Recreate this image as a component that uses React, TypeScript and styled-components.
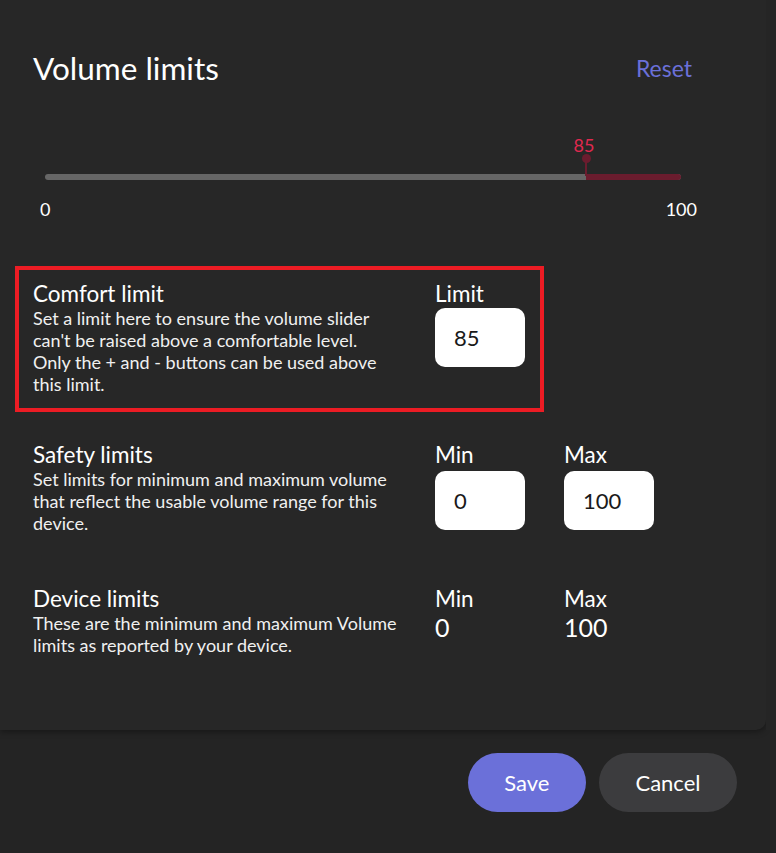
import styled, { createGlobalStyle } from 'styled-components';

const GlobalStyle = createGlobalStyle`
  * { box-sizing: border-box; }
  html, body {
    margin: 0;
    padding: 0;
    background: #242424;
    font-family: Lato, "Noto Sans", sans-serif;
    color: #fff;
  }
`;

const MIN = 0;
const MAX = 100;
const comfort = 85;

export default function App() {
  const pct = ((comfort - MIN) / (MAX - MIN)) * 100;

  return (
    <Page>
      <GlobalStyle />
      <Panel>
        <Content>
          <Header>
            <Title>Volume limits</Title>
            <ResetBtn>Reset</ResetBtn>
          </Header>

          <SliderArea>
            <Track>
              <Over style={{ left: `${pct}%` }} />
              <Thumb style={{ left: `${pct}%` }}>
                <ThumbValue>{comfort}</ThumbValue>
                <ThumbDot />
                <ThumbStem />
              </Thumb>
            </Track>
            <ScaleRow>
              <ScaleLabel>{MIN}</ScaleLabel>
              <ScaleLabel>{MAX}</ScaleLabel>
            </ScaleRow>
          </SliderArea>

          <Highlight>
            <Row $cols="402px 90px">
              <Info>
                <SectionTitle>Comfort limit</SectionTitle>
                <Desc $width={355}>
                  Set a limit here to ensure the volume slider can't be raised above a
                  comfortable level. Only the + and - buttons can be used above this limit.
                </Desc>
              </Info>
              <Field>
                <FieldLabel>Limit</FieldLabel>
                <NumberInput defaultValue={comfort} />
              </Field>
            </Row>
          </Highlight>

          <Section $top={30}>
            <Row $cols="402px 129px 129px">
              <Info>
                <SectionTitle>Safety limits</SectionTitle>
                <Desc $width={380}>
                  Set limits for minimum and maximum volume that reflect the usable volume
                  range for this device.
                </Desc>
              </Info>
              <Field $gap={3}>
                <FieldLabel>Min</FieldLabel>
                <NumberInput defaultValue={0} />
              </Field>
              <Field $gap={3}>
                <FieldLabel>Max</FieldLabel>
                <NumberInput defaultValue={100} />
              </Field>
            </Row>
          </Section>

          <Section $top={52}>
            <Row $cols="402px 129px 129px">
              <Info>
                <SectionTitle>Device limits</SectionTitle>
                <Desc $width={380}>
                  These are the minimum and maximum Volume limits as reported by your device.
                </Desc>
              </Info>
              <Field>
                <FieldLabel>Min</FieldLabel>
                <StaticValue>0</StaticValue>
              </Field>
              <Field>
                <FieldLabel>Max</FieldLabel>
                <StaticValue>100</StaticValue>
              </Field>
            </Row>
          </Section>
        </Content>
        <ScrollGutter />
      </Panel>

      <Footer>
        <PillButton $variant="primary">Save</PillButton>
        <PillButton $variant="secondary">Cancel</PillButton>
      </Footer>
    </Page>
  );
}

const Page = styled.div`
  height: 100vh;
  display: flex;
  flex-direction: column;
  background: #242424;
`;

const Panel = styled.div`
  flex: 1;
  display: flex;
  min-height: 0;
`;

const Content = styled.div`
  flex: 1;
  background: #272727;
  border-bottom-right-radius: 10px;
  box-shadow: 0 2px 6px rgba(0, 0, 0, 0.35);
  overflow: hidden;
`;

const ScrollGutter = styled.div`
  width: 10px;
  background: #252525;
`;

const Header = styled.div`
  margin: 50px 74px 0 33px;
  height: 36px;
  display: flex;
  align-items: center;
  justify-content: space-between;
`;

const Title = styled.h1`
  margin: 0;
  font-size: 31.5px;
  font-weight: 400;
  line-height: 36px;
`;

const ResetBtn = styled.button`
  background: none;
  border: none;
  padding: 0;
  font-family: inherit;
  font-size: 23px;
  line-height: 29px;
  color: #6b70d9;
  cursor: pointer;
`;

const SliderArea = styled.div`
  margin: 88px 0 0 45px;
  width: 636px;
`;

const Track = styled.div`
  position: relative;
  height: 6px;
  border-radius: 3px;
  background: #666;
`;

const Over = styled.div`
  position: absolute;
  top: 0;
  right: 0;
  bottom: 0;
  background: #6b1c2e;
  border-radius: 0 3px 3px 0;
`;

const Thumb = styled.div`
  position: absolute;
  bottom: 0;
  width: 0;
  height: 44px;
`;

const ThumbValue = styled.span`
  position: absolute;
  top: -1px;
  left: -12px;
  font-size: 18px;
  line-height: 21px;
  color: #e0294f;
`;

const ThumbDot = styled.span`
  position: absolute;
  top: 18px;
  left: -4px;
  width: 9px;
  height: 9px;
  border-radius: 50%;
  background: #6b1c2e;
`;

const ThumbStem = styled.span`
  position: absolute;
  top: 22px;
  left: -1px;
  width: 2px;
  height: 18px;
  background: #6b1c2e;
`;

const ScaleRow = styled.div`
  margin: 19px -16px 0 -5px;
  display: flex;
  justify-content: space-between;
`;

const ScaleLabel = styled.span`
  font-size: 18px;
  line-height: 21px;
  color: #fff;
`;

const Highlight = styled.div`
  margin: 46px 0 0 15px;
  width: 529px;
  border: 4px solid #ec1c24;
  padding: 11px 0 13px 14px;
`;

const Section = styled.div<{ $top: number }>`
  margin-top: ${({ $top }) => $top}px;
  padding-left: 33px;
`;

const Row = styled.div<{ $cols: string }>`
  display: grid;
  grid-template-columns: ${({ $cols }) => $cols};
  align-items: start;
`;

const Info = styled.div`
  display: flex;
  flex-direction: column;
`;

const SectionTitle = styled.h2`
  margin: 0;
  font-size: 22.5px;
  font-weight: 400;
  line-height: 26px;
`;

const Desc = styled.p<{ $width: number }>`
  margin: 0;
  max-width: ${({ $width }) => $width}px;
  font-size: 18px;
  line-height: 22px;
  color: #f0f0f0;
`;

const Field = styled.div<{ $gap?: number }>`
  display: flex;
  flex-direction: column;
  gap: ${({ $gap = 1 }) => $gap}px;
`;

const FieldLabel = styled.span`
  font-size: 22.5px;
  line-height: 26px;
`;

const NumberInput = styled.input`
  width: 90px;
  height: 59px;
  border: none;
  border-radius: 10px;
  background: #fff;
  padding: 0 0 0 19px;
  font-family: inherit;
  font-size: 22px;
  color: #1a1a1a;
  outline: none;
`;

const StaticValue = styled.span`
  font-size: 25px;
  line-height: 30px;
  margin-top: -1px;
`;

const Footer = styled.div`
  flex: none;
  height: 123px;
  display: flex;
  justify-content: flex-end;
  align-items: flex-start;
  gap: 13px;
  padding: 23px 39px 0 0;
`;

const PillButton = styled.button<{ $variant: 'primary' | 'secondary' }>`
  height: 59px;
  padding: 0 36.5px;
  border: none;
  border-radius: 30px;
  font-family: inherit;
  font-size: 22px;
  color: #fff;
  background: ${({ $variant }) => ($variant === 'primary' ? '#6b70d9' : '#3c3c3e')};
  cursor: pointer;
`;
